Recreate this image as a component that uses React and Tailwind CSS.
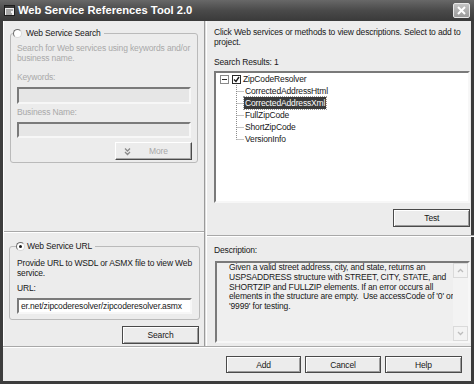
import React from "react";

const sunken =
  "border-2 border-t-[#7a7a7a] border-l-[#7a7a7a] border-b-[#f7f7f7] border-r-[#f7f7f7]";
const raisedBtn =
  "border border-[#4a4a4a] shadow-[inset_1px_1px_0_#ffffff,inset_-1px_-1px_0_#9c9c9c] bg-[#ececec] flex items-center justify-center";

function Radio({ checked }) {
  return (
    <span className="relative w-[9px] h-[9px] rounded-full border border-t-[#6e6e6e] border-l-[#6e6e6e] border-b-[#d8d8d8] border-r-[#d8d8d8] bg-white flex items-center justify-center shrink-0">
      {checked && <span className="w-[3px] h-[3px] rounded-full bg-[#1a1a1a]" />}
    </span>
  );
}

function TitleBar() {
  return (
    <div className="h-[21px] shrink-0 flex items-center bg-gradient-to-b from-[#686868] via-[#4a4a4a] to-[#3a3a3a] pl-[4px] pr-[4px]">
      <svg width="11" height="11" viewBox="0 0 11 11" className="shrink-0">
        <rect x="0.5" y="0.5" width="10" height="10" fill="#f2f2f2" stroke="#1e1e1e" />
        <rect x="1" y="1" width="9" height="2" fill="#3a3a3a" />
        <line x1="2" y1="5" x2="9" y2="5" stroke="#5a5a5a" />
        <line x1="2" y1="7" x2="7" y2="7" stroke="#5a5a5a" />
        <line x1="2" y1="9" x2="8" y2="9" stroke="#5a5a5a" />
      </svg>
      <span className="ml-[3px] text-[11.2px] leading-[13px] font-bold tracking-[0px] text-white">
        Web Service References Tool 2.0
      </span>
      <div className="ml-auto w-[17px] h-[15px] rounded-[2px] border border-[#e8e8e8] bg-gradient-to-b from-[#c4c4c4] to-[#9a9a9a] flex items-center justify-center">
        <svg width="9" height="9" viewBox="0 0 9 9">
          <path d="M1 1 L8 8 M8 1 L1 8" stroke="#ffffff" strokeWidth="2" />
        </svg>
      </div>
    </div>
  );
}

function Input({ disabled, value, className = "" }) {
  return (
    <div
      className={`${sunken} ${disabled ? "bg-[#e6e6e6]" : "bg-white"} flex items-center pl-[2px] overflow-hidden whitespace-nowrap ${className}`}
    >
      {value}
    </div>
  );
}

function LeftPanel() {
  return (
    <div className="w-[201px] shrink-0 flex flex-col border-l border-white">
      <div className="h-[211px] shrink-0 border-b border-[#a8a8a8]">
        <fieldset className="mt-[7px] ml-[6px] w-[188px] h-[135px] border border-[#bababa] rounded-[3px] p-0 m-0">
          <legend className="ml-[2px] pr-[3px] flex items-center gap-[4px] h-[10px]">
            <Radio />
            <span>Web Service Search</span>
          </legend>
          <div className="px-[6px] flex flex-col">
            <div className="mt-[5px] text-[#a9a9a9] whitespace-nowrap">
              Search for Web services using keywords and/or
              <br />
              business name.
            </div>
            <div className="mt-[9px] text-[#a9a9a9]">Keywords:</div>
            <Input disabled className="mt-[5px] h-[17px]" />
            <div className="mt-[3px] text-[#a9a9a9]">Business Name:</div>
            <Input disabled className="mt-[5px] h-[16px]" />
            <div className="mt-[4px] flex justify-end mr-[-1px]">
              <div className="w-[77px] h-[18px] border border-t-white border-l-white border-b-[#4a4a4a] border-r-[#4a4a4a] shadow-[inset_-1px_-1px_0_#a8a8a8] bg-[#ececec] flex items-center text-[#a9a9a9]">
                <svg width="9" height="9" viewBox="0 0 9 9" className="ml-[7px]">
                  <path d="M2 1.5 L4.5 4 L7 1.5 M2 5 L4.5 7.5 L7 5" stroke="#8a8a8a" strokeWidth="1.3" fill="none" />
                </svg>
                <span className="flex-1 text-center pr-[6px]">More</span>
              </div>
            </div>
          </div>
        </fieldset>
      </div>
      <div className="flex-1 border-t border-white flex flex-col">
        <fieldset className="mt-[8px] ml-[5px] w-[189px] h-[79px] border border-[#bababa] rounded-[3px] p-0 m-0">
          <legend className="ml-[6px] pr-[3px] flex items-center gap-[2px] h-[10px]">
            <Radio checked />
            <span>Web Service URL</span>
          </legend>
          <div className="px-[7px] flex flex-col">
            <div className="mt-[7px] whitespace-nowrap">
              Provide URL to WSDL or ASMX file to view Web
              <br />
              service.
            </div>
            <div className="mt-[5px]">URL:</div>
            <Input value="er.net/zipcoderesolver/zipcoderesolver.asmx" className="mt-[5px] h-[16px]" />
          </div>
        </fieldset>
        <div className="mt-[6px] flex justify-end mr-[5px]">
          <div className={`${raisedBtn} w-[77px] h-[18px]`}>Search</div>
        </div>
      </div>
    </div>
  );
}

function Connector({ last }) {
  return (
    <svg width="8" height="12" viewBox="0 0 8 12" className="shrink-0">
      <line x1="0.5" y1="0" x2="0.5" y2={last ? 6.5 : 12} stroke="#8a8a8a" strokeDasharray="1 1" />
      <line x1="0.5" y1="6.5" x2="8" y2="6.5" stroke="#8a8a8a" strokeDasharray="1 1" />
    </svg>
  );
}

function TreeChild({ label, selected, last }) {
  return (
    <div className="h-[12px] flex items-center pl-[20px]">
      <Connector last={last} />
      <span
        className={
          selected
            ? "bg-[#3a3a3a] text-white px-[1px] h-[12px] leading-[12px] outline outline-1 outline-dotted outline-[#9a9a9a]"
            : "px-[1px]"
        }
      >
        {label}
      </span>
    </div>
  );
}

function RightPanel() {
  return (
    <div className="flex-1 flex flex-col">
      <div className="h-[215px] shrink-0 border-b border-[#a8a8a8] pl-[7px] pr-[9px] pt-[6px] flex flex-col">
        <div className="whitespace-nowrap">
          Click Web services or methods to view descriptions. Select to add to
          <br />
          project.
        </div>
        <div className="mt-[10px]">Search Results: 1</div>
        <div className={`${sunken} bg-white mt-[4px] h-[132px] flex flex-col`}>
          <div className="h-[12px] flex items-center pl-[4px]">
            <span className="w-[9px] h-[9px] border border-[#8a8a8a] bg-white flex items-center justify-center shrink-0">
              <span className="w-[5px] h-[1px] bg-[#2a2a2a]" />
            </span>
            <span className="ml-[3px] w-[9px] h-[9px] border border-[#2a2a2a] bg-white flex items-center justify-center shrink-0">
              <svg width="7" height="7" viewBox="0 0 7 7">
                <path d="M1 3.5 L3 5.5 L6 1" stroke="#1a1a1a" strokeWidth="1.4" fill="none" />
              </svg>
            </span>
            <span className="ml-[2px]">ZipCodeResolver</span>
          </div>
          <TreeChild label="CorrectedAddressHtml" />
          <TreeChild label="CorrectedAddressXml" selected />
          <TreeChild label="FullZipCode" />
          <TreeChild label="ShortZipCode" />
          <TreeChild label="VersionInfo" last />
        </div>
        <div className="mt-[6px] flex justify-end">
          <div className={`${raisedBtn} w-[77px] h-[18px]`}>Test</div>
        </div>
      </div>
      <div className="flex-1 border-t border-white pl-[7px] pr-[9px] pt-[8px] flex flex-col">
        <div>Description:</div>
        <div className={`${sunken} bg-[#efefef] mt-[6px] ml-[1px] h-[82px] flex`}>
          <div className="flex-1 pl-[12px] leading-[9.8px] whitespace-pre overflow-hidden">
            {"Given a valid street address, city, and state, returns an\nUSPSADDRESS structure with STREET, CITY, STATE, and\nSHORTZIP and FULLZIP elements. If an error occurs all\nelements in the structure are empty.  Use accessCode of '0' or\n'9999' for testing."}
          </div>
          <div className="w-[15px] shrink-0 bg-[#f3f3f3] flex flex-col justify-between">
            <div className="h-[15px] border border-[#dadada] flex items-center justify-center">
              <svg width="7" height="5" viewBox="0 0 7 5">
                <path d="M1 4 L3.5 1.5 L6 4" stroke="#bdbdbd" strokeWidth="1.3" fill="none" />
              </svg>
            </div>
            <div className="h-[15px] border border-[#dadada] flex items-center justify-center">
              <svg width="7" height="5" viewBox="0 0 7 5">
                <path d="M1 1 L3.5 3.5 L6 1" stroke="#bdbdbd" strokeWidth="1.3" fill="none" />
              </svg>
            </div>
          </div>
        </div>
      </div>
    </div>
  );
}

function BottomBar() {
  return (
    <div className="flex-1 border-t border-white shadow-[0_-1px_0_#a8a8a8] flex justify-end items-start pt-[8px] pr-[9px] gap-[4px]">
      <div className={`${raisedBtn} w-[75px] h-[17px]`}>Add</div>
      <div className={`${raisedBtn} w-[76px] h-[17px]`}>Cancel</div>
      <div className={`${raisedBtn} w-[77px] h-[17px]`}>Help</div>
    </div>
  );
}

export default function App() {
  return (
    <div className="w-[474px] h-[384px] bg-[#3d3d3d] flex flex-col font-['Liberation_Sans',Arial,sans-serif] text-[8.5px] leading-[10px] tracking-[-0.15px] text-[#181818] overflow-hidden">
      <TitleBar />
      <div className="flex-1 mx-[3px] mb-[3px] bg-[#ececec] flex flex-col">
        <div className="h-[326px] shrink-0 flex">
          <LeftPanel />
          <div className="w-[3px] shrink-0 border-l border-[#9a9a9a] border-r border-r-white bg-[#dedede]" />
          <RightPanel />
        </div>
        <BottomBar />
      </div>
    </div>
  );
}
